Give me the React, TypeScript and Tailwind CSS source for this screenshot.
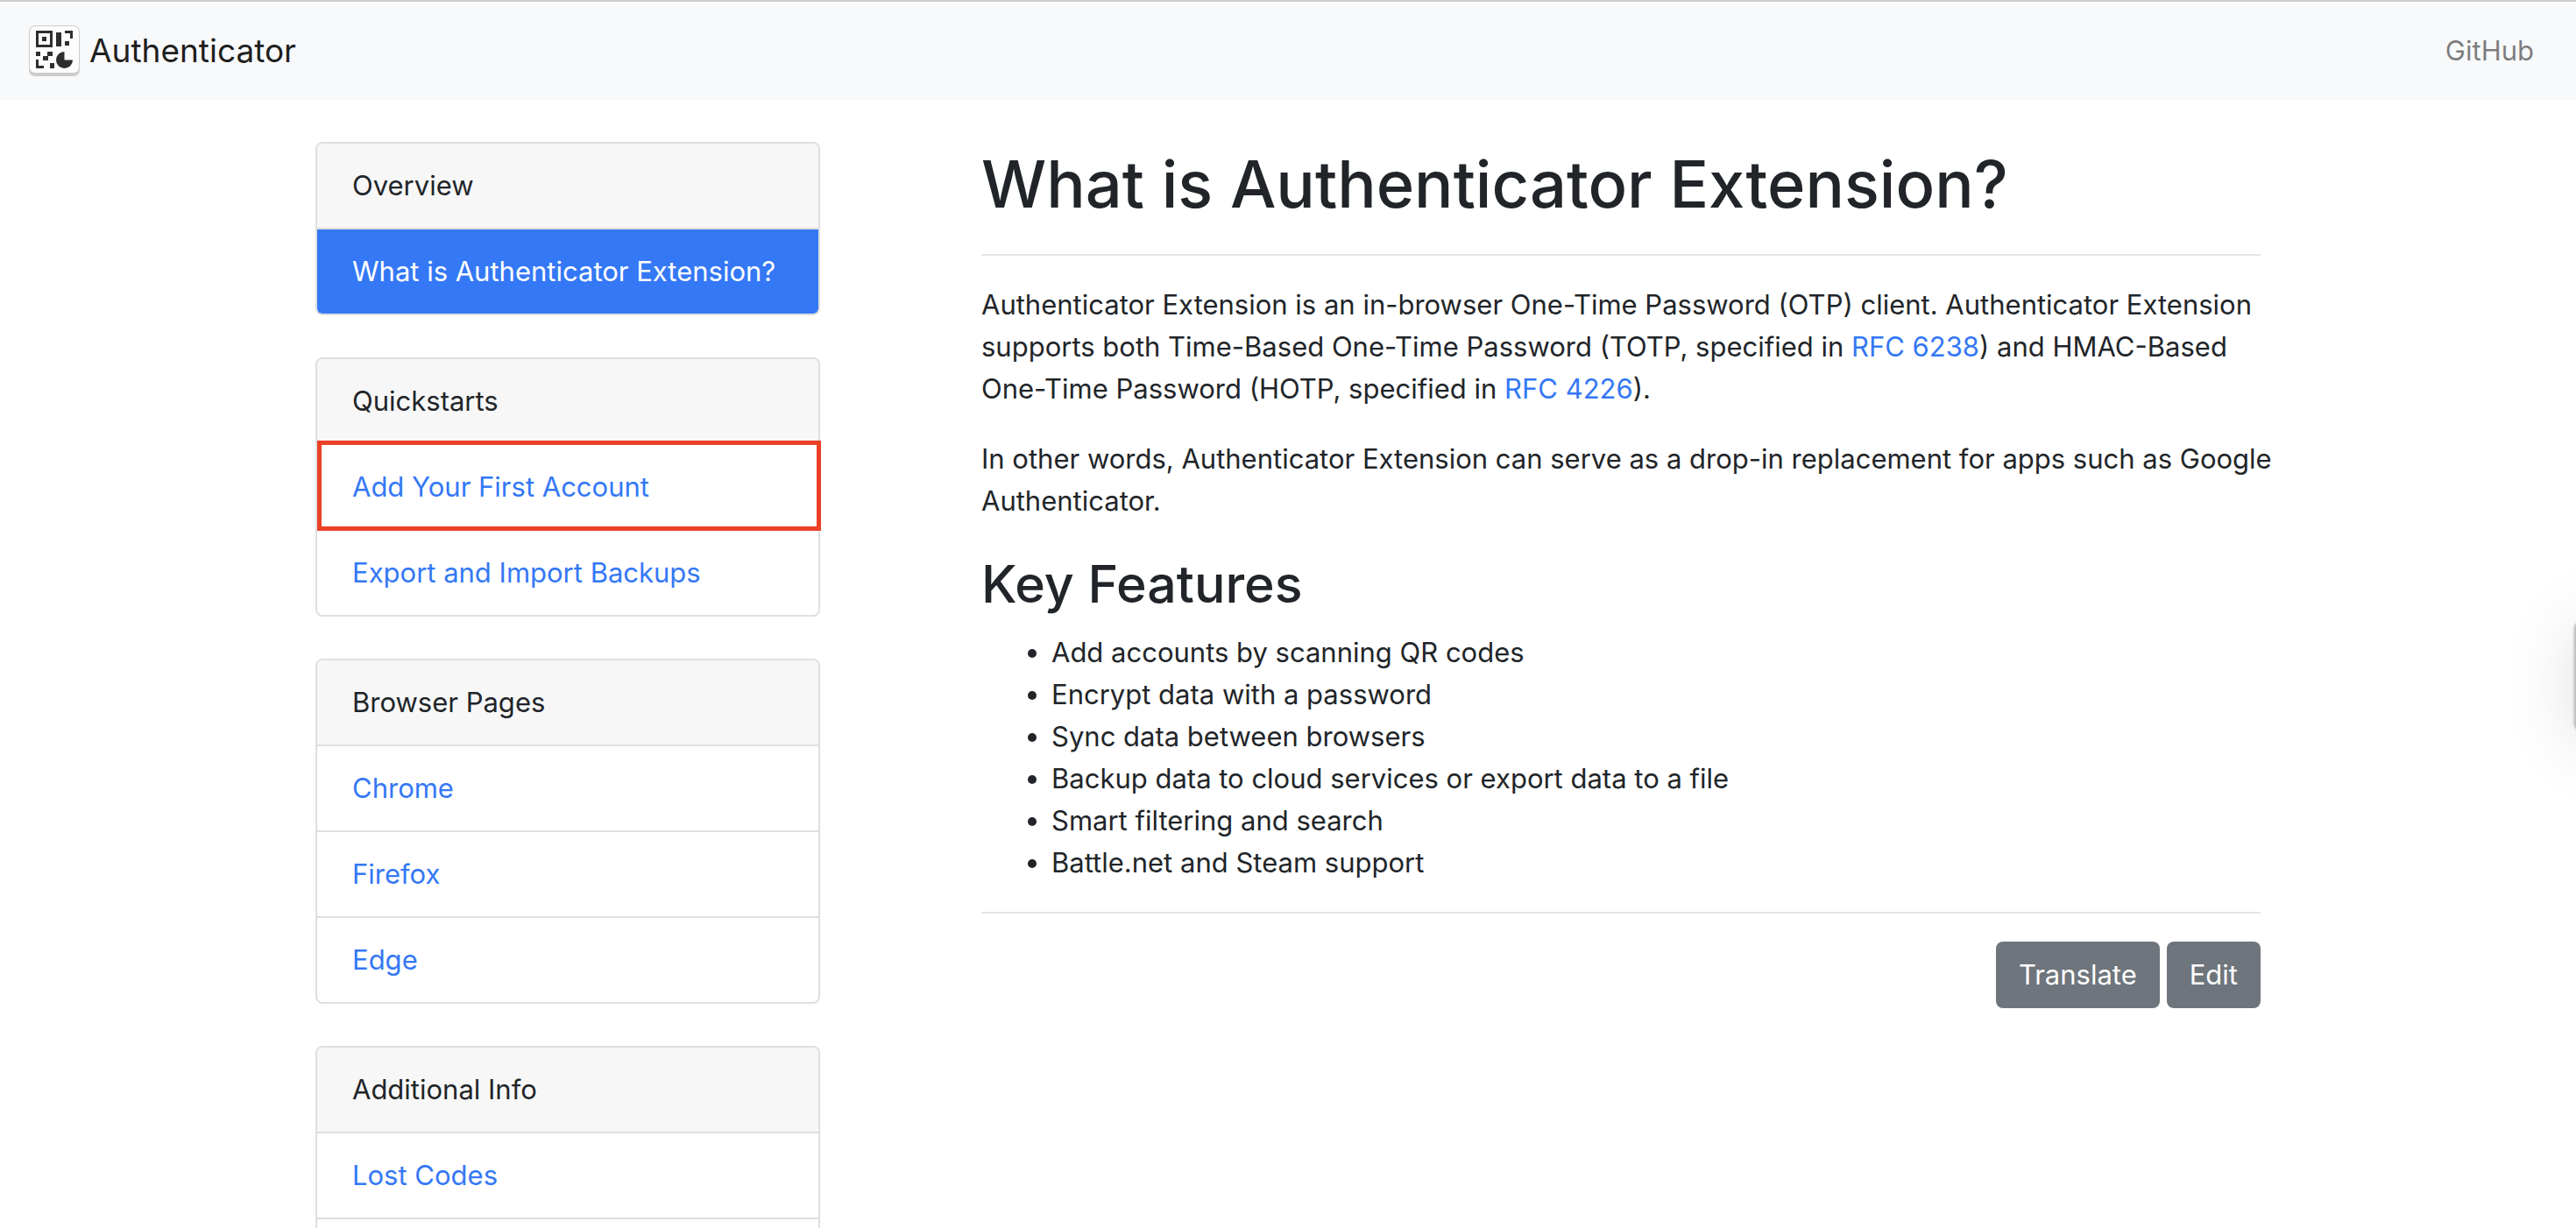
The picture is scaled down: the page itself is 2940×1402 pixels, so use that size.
type NavItem = {
  label: string
  active?: boolean
  highlighted?: boolean
}

type NavSection = {
  title: string
  items: NavItem[]
}

const sections: NavSection[] = [
  { title: "Overview", items: [{ label: "What is Authenticator Extension?", active: true }] },
  {
    title: "Quickstarts",
    items: [{ label: "Add Your First Account", highlighted: true }, { label: "Export and Import Backups" }],
  },
  { title: "Browser Pages", items: [{ label: "Chrome" }, { label: "Firefox" }, { label: "Edge" }] },
  { title: "Additional Info", items: [{ label: "Lost Codes" }, { label: "" }] },
]

const features = [
  "Add accounts by scanning QR codes",
  "Encrypt data with a password",
  "Sync data between browsers",
  "Backup data to cloud services or export data to a file",
  "Smart filtering and search",
  "Battle.net and Steam support",
]

function Logo() {
  return (
    <svg viewBox="0 0 60 60" className="size-[60px] shrink-0" aria-hidden="true">
      <rect x="1" y="1" width="58" height="58" rx="7" fill="#cccccc" />
      <rect x="2" y="2" width="56" height="53" rx="6" fill="#fdfdfd" />
      <g fill="#2e2e2e">
        <path fillRule="evenodd" d="M9 7h19v19H9zM12 10v13h13V10z" />
        <rect x="16" y="14" width="5" height="5" />
        <rect x="32" y="9" width="6" height="16" />
        <path d="M42 7h9v9h-3v-6h-6zM42 19h5v5h-5z" />
        <path d="M9 31h5v5H9zM22 31h6v5h-5v5h-6v-5h5zM9 40h3v7h6v3H9zM25 44h5v6h-5z" />
        <path d="M41.500 31v9.500h9.500a9.500 9.500 0 1 1-9.500-9.500z" />
      </g>
    </svg>
  )
}

function SectionCard({ title, items }: NavSection) {
  return (
    <section className="rounded-lg border-2 border-[#dfdfdf]">
      <h2 className="rounded-t-md bg-[#f7f7f7] px-10 py-6">{title}</h2>
      <ul>
        {items.map((item) => (
          <li key={item.label} className="relative border-t-2 border-[#dfdfdf]">
            <a
              href="#"
              className={`block min-h-24 px-10 py-6 ${
                item.active ? "rounded-b-md bg-[#3478f6] text-white" : "text-[#3478f6]"
              }`}
            >
              {item.label}
            </a>
            {item.highlighted && (
              <span className="pointer-events-none absolute -top-[5px] -right-[3px] -bottom-0.5 left-0 z-10 border-5 border-[#eb4025]" />
            )}
          </li>
        ))}
      </ul>
    </section>
  )
}

export default function App() {
  return (
    <div className="relative h-screen overflow-hidden bg-white font-['Inter',sans-serif] text-[31px] leading-[48px] text-[#212529]">
      {/* Navbar */}
      <nav className="flex items-center justify-between border-t-2 border-[#cccccc] bg-[#f8f9fa] py-4 pr-12 pl-8">
        <a href="#" className="flex items-center gap-2.5 py-2.5 text-[37px] leading-[60px] text-black/90">
          <Logo />
          Authenticator
        </a>
        <a href="#" className="text-black/50">
          GitHub
        </a>
      </nav>

      <div className="mx-auto flex max-w-[2280px] items-start gap-[184px] px-[30px] pt-12">
        {/* Sidebar */}
        <aside className="flex w-[576px] shrink-0 flex-col gap-12">
          {sections.map((section) => (
            <SectionCard key={section.title} {...section} />
          ))}
        </aside>

        {/* Content */}
        <main className="min-w-0 flex-1">
          <h1 className="text-[74px] leading-[96px] font-medium">What is Authenticator Extension?</h1>
          <hr className="my-8 border-t-2 border-[#e5e5e5]" />
          <div className="-mr-6">
            <p className="mb-8">
              Authenticator Extension is an in-browser One-Time Password (OTP) client. Authenticator Extension supports
              both Time-Based One-Time Password (TOTP, specified in{" "}
              <a href="#" className="text-[#3478f6]">
                RFC 6238
              </a>
              ) and HMAC-Based One-Time Password (HOTP, specified in{" "}
              <a href="#" className="text-[#3478f6]">
                RFC 4226
              </a>
              ).
            </p>
            <p className="mb-8">
              In other words, Authenticator Extension can serve as a drop-in replacement for apps such as Google
              Authenticator.
            </p>
          </div>
          <h2 className="mb-4 text-[59px] leading-[77px] font-medium">Key Features</h2>
          <ul className="list-disc pl-20">
            {features.map((feature) => (
              <li key={feature}>{feature}</li>
            ))}
          </ul>
          <hr className="my-8 border-t-2 border-[#e5e5e5]" />
          <div className="flex justify-end gap-2">
            <button className="rounded-lg bg-[#6e757c] px-[26px] py-3.5 text-white">Translate</button>
            <button className="rounded-lg bg-[#6e757c] px-[26px] py-3.5 text-white">Edit</button>
          </div>
        </main>
      </div>

      {/* Docked panel peeking in from the right edge */}
      <div className="absolute top-[704px] -right-[98px] h-[136px] w-[100px] rounded-2xl bg-[#c4c4c4] shadow-[0_0_3px_rgba(0,0,0,0.3),0_10px_80px_rgba(0,0,0,0.13)]" />
    </div>
  )
}
